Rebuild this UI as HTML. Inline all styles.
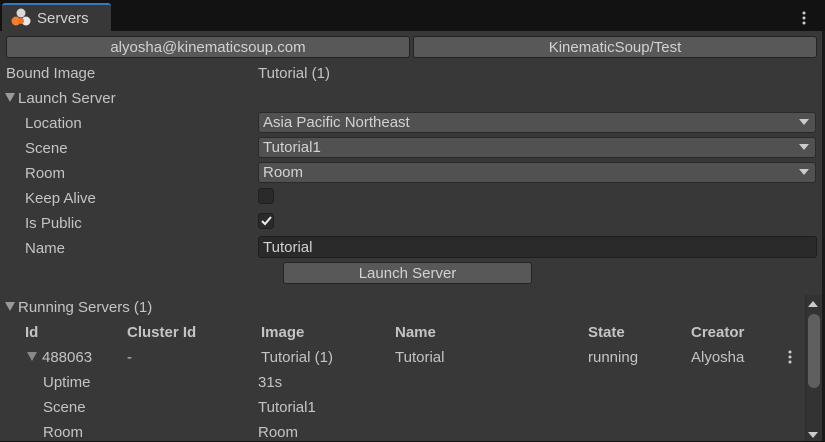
<!DOCTYPE html>
<html><head><meta charset="utf-8"><style>
*{margin:0;padding:0;box-sizing:border-box}
body{width:825px;height:441px;overflow:hidden;background:#121212;font-family:"Liberation Sans",sans-serif;font-size:15px;color:#c4c4c4;position:relative}
.a{position:absolute;white-space:nowrap;line-height:18px;margin-top:1px}
.panel{position:absolute;left:0;top:31px;width:822px;height:410px;background:#383838}
.btn{position:absolute;background:#585858;border:1px solid #242424;border-radius:3px;text-align:center;line-height:21px;color:#d2d2d2}
.dd{position:absolute;left:258px;width:558px;height:21px;background:#515151;border:1px solid #2a2a2a;border-radius:3px;padding-left:4px;line-height:20px;color:#d2d2d2}
.dd svg{position:absolute;right:6px;top:6px}
.cb{position:absolute;left:258px;width:16px;height:16px;background:#2a2a2a;border:1px solid #1f1f1f;border-radius:3px}
.b{font-weight:bold}
.tri{position:absolute}
</style></head><body>
<div style="position:absolute;left:2px;top:3px;width:109px;height:30px;background:#383838;border-top:2px solid #3a79bb;border-radius:3px 3px 0 0"></div>
<svg class="tri" style="left:9px;top:8px" width="24" height="20" viewBox="0 0 24 20">
<circle cx="12" cy="5" r="4.5" fill="#d8d8d8"/><circle cx="7" cy="13" r="4.5" fill="#f08030"/><circle cx="17" cy="13" r="4.5" fill="#e8e8e8"/><circle cx="12" cy="13" r="3" fill="#f07020"/></svg>
<div class="a" style="left:37px;top:9px;color:#d2d2d2">Servers</div>
<svg class="tri" style="left:802px;top:11px" width="4" height="14"><circle cx="2" cy="2" r="1.5" fill="#ccc"/><circle cx="2" cy="7" r="1.5" fill="#ccc"/><circle cx="2" cy="12" r="1.5" fill="#ccc"/></svg>
<div class="panel"></div>
<div style="position:absolute;left:822px;top:31px;width:3px;height:410px;background:#191919"></div>
<div class="btn" style="left:6px;top:36px;width:404px;height:22px">alyosha@kinematicsoup.com</div>
<div class="btn" style="left:413px;top:36px;width:404px;height:22px">KinematicSoup/Test</div>
<div class="a" style="left:6px;top:64px">Bound Image</div><div class="a" style="left:258px;top:64px">Tutorial (1)</div>
<svg class="tri" style="left:5px;top:93px" width="10" height="9"><path d="M0 0H10L5 9Z" fill="#999"/></svg>
<div class="a" style="left:18px;top:89px">Launch Server</div>
<div class="a" style="left:25px;top:114px">Location</div>
<div class="dd" style="top:112px">Asia Pacific Northeast<svg width="10" height="7"><path d="M0 0H10L5 6Z" fill="#ccc"/></svg></div>
<div class="a" style="left:25px;top:139px">Scene</div>
<div class="dd" style="top:137px">Tutorial1<svg width="10" height="7"><path d="M0 0H10L5 6Z" fill="#ccc"/></svg></div>
<div class="a" style="left:25px;top:164px">Room</div>
<div class="dd" style="top:162px">Room<svg width="10" height="7"><path d="M0 0H10L5 6Z" fill="#ccc"/></svg></div>
<div class="a" style="left:25px;top:189px">Keep Alive</div>
<div class="cb" style="top:188px"></div>
<div class="a" style="left:25px;top:214px">Is Public</div>
<div class="cb" style="top:213px"><svg style="position:absolute;left:2px;top:2px" width="11" height="10"><path d="M1 5L4 8L10 1" stroke="#eee" stroke-width="2" fill="none"/></svg></div>
<div class="a" style="left:25px;top:239px">Name</div>
<div style="position:absolute;left:258px;top:236px;width:559px;height:22px;background:#2a2a2a;border:1px solid #1e1e1e;border-radius:3px;padding-left:4px;line-height:21px;color:#d2d2d2">Tutorial</div>
<div class="btn" style="left:283px;top:262px;width:249px;height:22px">Launch Server</div>
<svg class="tri" style="left:5px;top:302px" width="10" height="9"><path d="M0 0H10L5 9Z" fill="#999"/></svg>
<div class="a" style="left:18px;top:298px">Running Servers (1)</div>
<div class="a b" style="left:25px;top:323px">Id</div>
<div class="a b" style="left:127px;top:323px">Cluster Id</div>
<div class="a b" style="left:261px;top:323px">Image</div>
<div class="a b" style="left:395px;top:323px">Name</div>
<div class="a b" style="left:588px;top:323px">State</div>
<div class="a b" style="left:691px;top:323px">Creator</div>
<svg class="tri" style="left:27px;top:352px" width="10" height="9"><path d="M0 0H10L5 9Z" fill="#888"/></svg>
<div class="a" style="left:42px;top:348px">488063</div>
<div class="a" style="left:127px;top:348px">-</div>
<div class="a" style="left:261px;top:348px">Tutorial (1)</div>
<div class="a" style="left:395px;top:348px">Tutorial</div>
<div class="a" style="left:588px;top:348px">running</div>
<div class="a" style="left:691px;top:348px">Alyosha</div>
<svg class="tri" style="left:788px;top:350px" width="4" height="14"><circle cx="2" cy="2" r="1.5" fill="#ccc"/><circle cx="2" cy="7" r="1.5" fill="#ccc"/><circle cx="2" cy="12" r="1.5" fill="#ccc"/></svg>
<div class="a" style="left:43px;top:373px">Uptime</div><div class="a" style="left:258px;top:373px">31s</div>
<div class="a" style="left:43px;top:398px">Scene</div><div class="a" style="left:258px;top:398px">Tutorial1</div>
<div class="a" style="left:43px;top:423px">Room</div><div class="a" style="left:258px;top:423px">Room</div>
<div style="position:absolute;left:805px;top:295px;width:17px;height:146px;background:#333;border-left:1px solid #2c2c2c"></div>
<svg class="tri" style="left:808px;top:301px" width="10" height="7"><path d="M0 6H10L5 0Z" fill="#ccc"/></svg>
<div style="position:absolute;left:808px;top:314px;width:12px;height:74px;background:#5f5f5f;border-radius:6px"></div>
<svg class="tri" style="left:808px;top:432px" width="10" height="7"><path d="M0 0H10L5 6Z" fill="#ccc"/></svg>
</body></html>
